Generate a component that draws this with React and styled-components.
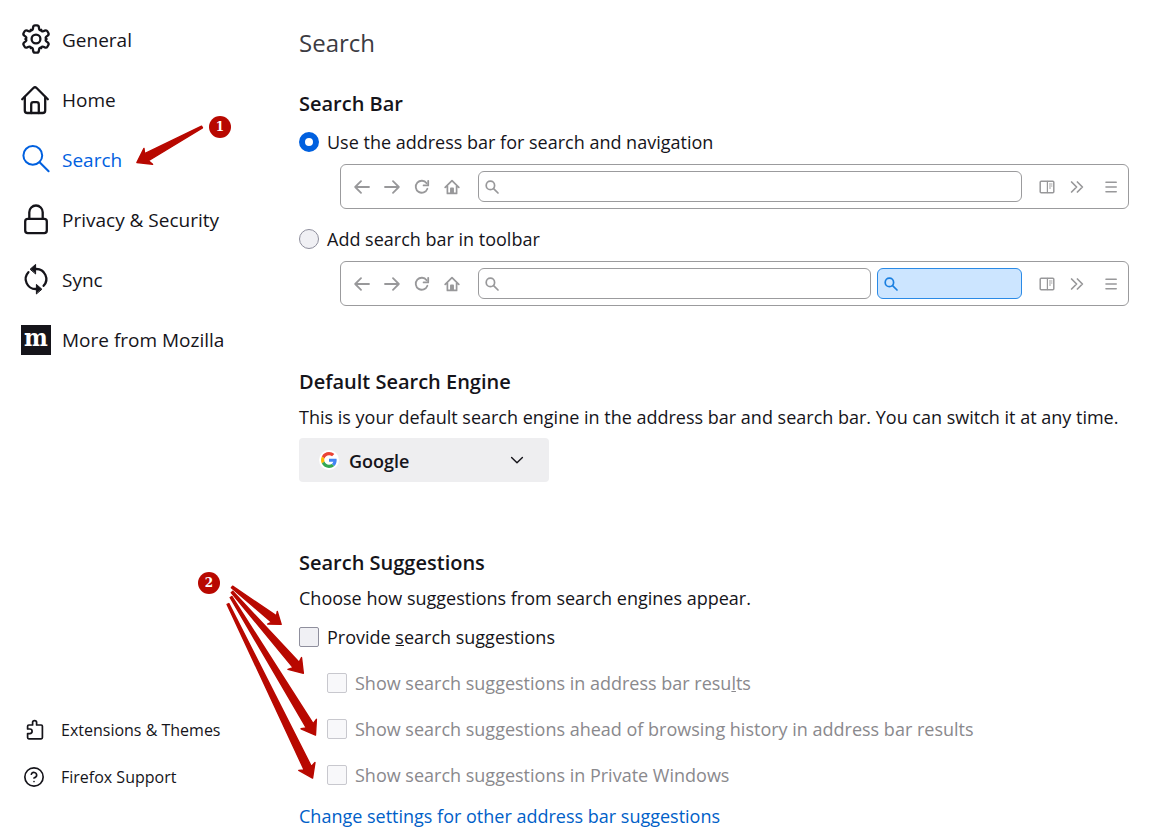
import React, { useState } from "react";
import styled, { createGlobalStyle } from "styled-components";
import { CircleQuestionMark } from "lucide-react";

// Styles
const GlobalStyle = createGlobalStyle`
  * {
    box-sizing: border-box;
  }
  body {
    margin: 0;
    background: #ffffff;
    color: #15141a;
    font-family: "Open Sans", "Noto Sans", sans-serif;
    font-size: 18px;
    line-height: 28px;
  }
`;

const Page = styled.div`
  position: relative;
  display: grid;
  grid-template-columns: 299px minmax(0, 1fr);
  min-height: 100vh;
`;

const Sidebar = styled.nav`
  display: flex;
  flex-direction: column;
  justify-content: space-between;
  padding: 10px 0 35px 21px;
`;

const NavList = styled.ul`
  list-style: none;
  margin: 0;
  padding: 0;
`;

const NavLink = styled.a`
  display: flex;
  align-items: center;
  gap: 11px;
  height: 60px;
  color: ${(props) => (props.$active ? "#0060df" : "#15141a")};
  font-size: 19px;
  text-decoration: none;

  svg {
    flex: none;
    overflow: visible;
  }
`;

const FooterLink = styled(NavLink)`
  height: 47px;
  gap: 16px;
  padding-left: 2px;
  font-size: 16px;
`;

const MozillaLogo = styled.span`
  display: flex;
  align-items: center;
  justify-content: center;
  width: 30px;
  height: 30px;
  background: #15141a;
  color: #ffffff;
  font: bold 25px/30px "DejaVu Serif Condensed", "DejaVu Serif", serif;
  padding-bottom: 4px;
`;

const Main = styled.main`
  padding: 27px 43px 4px 0;
`;

const Title = styled.h1`
  margin: 0 0 31px;
  color: #3c3b42;
  font-size: 24px;
  font-weight: 400;
  line-height: 32px;
`;

const Section = styled.section`
  margin-bottom: ${(props) => props.$space || 0}px;
`;

const Heading = styled.h2`
  margin: 0;
  font-size: 20px;
  font-weight: 600;
  line-height: 28px;
`;

const Text = styled.p`
  margin: 7px 0;
`;

const Option = styled.label`
  display: flex;
  align-items: center;
  gap: 8px;
  width: fit-content;
  margin-top: ${(props) => props.$top}px;
  margin-left: ${(props) => (props.$nested ? 28 : 0)}px;
  color: ${(props) => (props.$nested ? "#8a898d" : "#15141a")};
`;

const Radio = styled.input`
  appearance: none;
  flex: none;
  width: 20px;
  height: 20px;
  margin: 0;
  border: 1px solid #8f8f9d;
  border-radius: 50%;
  background: #f0f0f4;

  &:checked {
    border: 6px solid #0060df;
    background: #ffffff;
  }
`;

const Checkbox = styled.input`
  appearance: none;
  flex: none;
  width: 20px;
  height: 20px;
  margin: 0;
  border: 1px solid #8f8f9d;
  border-radius: 2px;
  background: #f0f0f4;

  &:checked {
    border-color: #0060df;
    background: #0060df;
  }
  &:disabled {
    border-color: #c8c8ce;
    background: #f8f8fa;
  }
`;

const ToolbarFrame = styled.div`
  display: flex;
  align-items: center;
  height: 45px;
  margin: 8px 0 0 41px;
  padding: 0 9px 0 13px;
  border: 1px solid #9b9b9d;
  border-radius: 6px;
`;

const ToolGroup = styled.div`
  display: flex;
  gap: 14px;
`;

const ToolButton = styled.button`
  display: flex;
  padding: 0;
  border: none;
  background: transparent;
  color: #98989a;
  margin-left: ${(props) => (props.$apart ? 4 : 0)}px;
`;

const Fields = styled.div`
  display: flex;
  flex: 1;
  gap: 6px;
  margin: 0 17px 0 18px;
`;

const FieldBox = styled.label`
  display: flex;
  align-items: center;
  flex: ${(props) => (props.$accent ? "0 0 145px" : "1")};
  gap: 6px;
  min-width: 0;
  height: 31px;
  padding: 0 6px;
  border: 1px solid ${(props) => (props.$accent ? "#2a8ae6" : "#9b9b9d")};
  border-radius: 6px;
  background: ${(props) => (props.$accent ? "#cce5ff" : "#ffffff")};
  color: ${(props) => (props.$accent ? "#1a7fe0" : "#98989a")};

  svg {
    flex: none;
  }
`;

const FieldInput = styled.input`
  flex: 1;
  min-width: 0;
  border: none;
  outline: none;
  background: transparent;
`;

const EngineWrapper = styled.div`
  position: relative;
  width: 250px;
`;

const EngineSelect = styled.select`
  appearance: none;
  display: block;
  width: 100%;
  height: 44px;
  padding: 2px 50px 0 50px;
  border: none;
  border-radius: 4px;
  background: #eeeef0;
  color: #15141a;
  font: 600 18px/28px "Open Sans", "Noto Sans", sans-serif;
`;

const EngineLogo = styled.span`
  position: absolute;
  top: 12px;
  left: 20px;
  display: flex;
  align-items: center;
  justify-content: center;
  width: 20px;
  height: 20px;
  border-radius: 50%;
  background: #ffffff;
  pointer-events: none;
`;

const EngineChevron = styled.span`
  position: absolute;
  top: 14px;
  right: 24px;
  display: flex;
  pointer-events: none;
`;

const MoreLink = styled.a`
  display: block;
  width: fit-content;
  margin-top: 13px;
  color: #0060c8;
  text-decoration: none;
`;

const Overlay = styled.svg`
  position: absolute;
  top: 0;
  left: 0;
  overflow: visible;
  pointer-events: none;
`;

const Badge = styled.span`
  position: absolute;
  top: ${(props) => props.$y}px;
  left: ${(props) => props.$x}px;
  width: 22px;
  height: 22px;
  border-radius: 50%;
  background: #b80800;
  color: #ffffff;
  font: bold 12px/22px "DejaVu Serif", serif;
  text-align: center;
`;

// Icons
const Icon = ({ size = 30, width = 2.3, children }) => (
  <svg
    width={size}
    height={size}
    viewBox={`0 0 ${size} ${size}`}
    fill="none"
    stroke="currentColor"
    strokeWidth={width}
    strokeLinecap="round"
    strokeLinejoin="round"
    aria-hidden="true"
  >
    {children}
  </svg>
);

const GearIcon = () => (
  <Icon>
    <g transform="translate(15 14)">
      {[0, 60, 120, 180, 240, 300].map((angle) => (
        <path
          key={angle}
          transform={`rotate(${angle})`}
          d="M-5.2 -9C-4.1 -8.4 -3.3 -9 -3.1 -10.2L-2.9 -11.8Q-2.6 -13.7 -1 -13.7H1Q2.6 -13.7 2.9 -11.8L3.1 -10.2C3.3 -9 4.1 -8.4 5.2 -9"
        />
      ))}
      <circle r="4.4" />
    </g>
  </Icon>
);

const HomeIcon = () => (
  <Icon>
    <path d="M1.2 14.2 12.4 3Q14 1.6 15.6 3L26.8 14.2" />
    <path d="M3.8 12V25.4Q3.8 28 6.4 28H21.6Q24.2 28 24.2 25.4V12" />
    <path d="M10.2 28V19.4Q10.2 17.2 12.4 17.2H15.6Q17.8 17.2 17.8 19.4V28" />
  </Icon>
);

const SearchIcon = () => (
  <Icon width={2}>
    <circle cx="11.8" cy="10.4" r="9.4" />
    <path d="M18.6 17.2 27.6 26.2" />
  </Icon>
);

const LockIcon = () => (
  <Icon>
    <rect x="4.2" y="13.8" width="21.6" height="14.4" rx="2.6" />
    <path d="M8.3 13.8V7.2a6.7 6.7 0 0 1 13.4 0V13.8" />
  </Icon>
);

const SyncIcon = () => (
  <Icon>
    <path d="M15 4A10 10 0 0 1 22.6 20.8" />
    <path d="M15 24A10 10 0 0 1 7.4 7.2" />
    <path
      d="M9.4 4 14.6 -0.6V8.6ZM20.6 24 15.4 19.4V28.6Z"
      fill="currentColor"
      strokeWidth="1"
    />
  </Icon>
);

const PuzzleIcon = () => (
  <Icon size={22} width={1.7}>
    <path d="M4.6 10V7.2Q4.6 6 5.8 6H9.6V3.6a2 2 0 0 1 4 0V6H18.2Q19.4 6 19.4 7.2V18.6Q19.4 19.8 18.2 19.8H5.8Q4.6 19.8 4.6 18.6V14.6H6.8a2.3 2.3 0 0 0 0-4.6Z" />
  </Icon>
);

const BackIcon = () => (
  <Icon size={16} width={1.8}>
    <path d="M15 8H1.4M7 2.2 1.2 8 7 13.8" />
  </Icon>
);

const ForwardIcon = () => (
  <Icon size={16} width={1.8}>
    <path d="M1 8H14.6M9 2.2 14.8 8 9 13.8" />
  </Icon>
);

const ReloadIcon = () => (
  <Icon size={16} width={1.8}>
    <path d="M13.4 9.8A6 6 0 1 1 12.6 4.2" />
    <path d="M14.2 1.8V6.4H9.6" />
  </Icon>
);

const SmallHomeIcon = () => (
  <Icon size={16} width={1.7}>
    <path d="M1.2 8.4 8 1.6 14.8 8.4M3.4 7V14.4H12.6V7" />
    <path d="M6.9 14V9.4H9.1V14Z" fill="currentColor" />
  </Icon>
);

const SmallSearchIcon = () => (
  <Icon size={14} width={1.7}>
    <circle cx="5.4" cy="5.4" r="4.2" />
    <path d="M8.6 8.6 13 13" />
  </Icon>
);

const ReaderIcon = () => (
  <Icon size={16} width={1.5}>
    <rect x="1.2" y="2.2" width="13.6" height="11.6" rx="1" />
    <path d="M8.4 2.4V13.6" strokeWidth="1.2" />
    <path d="M10.4 5H13M10.4 7H13M10.4 9H11.6" strokeWidth="0.9" />
  </Icon>
);

const OverflowIcon = () => (
  <Icon size={16} width={1.7}>
    <path d="M2.6 3 7.6 8 2.6 13M8.4 3 13.4 8 8.4 13" />
  </Icon>
);

const MenuIcon = () => (
  <Icon size={16} width={1.6}>
    <path d="M3 3.2H13.2M3 8H13.2M3 12.8H13.2" />
  </Icon>
);

const GoogleIcon = () => (
  <svg width="16" height="16" viewBox="0 0 48 48" aria-hidden="true">
    <path
      fill="#EA4335"
      d="M24 9.5c3.54 0 6.71 1.22 9.21 3.6l6.85-6.85C35.9 2.38 30.47 0 24 0 14.62 0 6.51 5.38 2.56 13.22l7.98 6.19C12.43 13.72 17.74 9.5 24 9.5z"
    />
    <path
      fill="#4285F4"
      d="M46.98 24.55c0-1.57-.15-3.09-.38-4.55H24v9.02h12.94c-.58 2.96-2.26 5.48-4.78 7.18l7.73 6c4.51-4.18 7.09-10.36 7.09-17.65z"
    />
    <path
      fill="#FBBC05"
      d="M10.53 28.59c-.48-1.45-.76-2.99-.76-4.59s.27-3.14.76-4.59l-7.98-6.19C.92 16.46 0 20.12 0 24c0 3.88.92 7.54 2.56 10.78l7.97-6.19z"
    />
    <path
      fill="#34A853"
      d="M24 48c6.48 0 11.93-2.13 15.89-5.81l-7.73-6c-2.15 1.45-4.92 2.3-8.16 2.3-6.26 0-11.57-4.22-13.47-9.91l-7.98 6.19C6.51 42.62 14.62 48 24 48z"
    />
  </svg>
);

// Data
const pages = [
  { id: "general", label: "General", icon: <GearIcon /> },
  { id: "home", label: "Home", icon: <HomeIcon /> },
  { id: "search", label: "Search", icon: <SearchIcon /> },
  { id: "privacy", label: "Privacy & Security", icon: <LockIcon /> },
  { id: "sync", label: "Sync", icon: <SyncIcon /> },
  {
    id: "mozilla",
    label: "More from Mozilla",
    icon: <MozillaLogo aria-hidden="true">m</MozillaLogo>,
  },
];

const arrows = [
  { from: [202, 127], to: [136, 163] },
  { from: [232, 587], to: [282, 625], head: 12 },
  { from: [232, 592], to: [304, 674] },
  { from: [231, 597], to: [316, 736] },
  { from: [228, 604], to: [313, 779] },
];

// Tapered arrow: thin at the tail, wide where it meets the head
const Arrow = ({ from, to, head = 14 }) => {
  const length = Math.hypot(to[0] - from[0], to[1] - from[1]);
  const angle = Math.atan2(to[1] - from[1], to[0] - from[0]);
  const wing = head > 12 ? 9 : 8;
  const neck = length - head + 2;
  return (
    <path
      transform={`translate(${from}) rotate(${(angle * 180) / Math.PI})`}
      d={`M0 -1L${neck} -4L${length - head} ${-wing}L${length - 1} 0L${
        length - head
      } ${wing}L${neck} 4L0 1Z`}
    />
  );
};

const Field = ({ label, accent }) => (
  <FieldBox $accent={accent}>
    <SmallSearchIcon />
    <FieldInput type="text" aria-label={label} readOnly tabIndex={-1} />
  </FieldBox>
);

const Toolbar = ({ withSearchBar }) => (
  <ToolbarFrame>
    <ToolGroup>
      <ToolButton type="button" aria-label="Back">
        <BackIcon />
      </ToolButton>
      <ToolButton type="button" aria-label="Forward">
        <ForwardIcon />
      </ToolButton>
      <ToolButton type="button" aria-label="Reload">
        <ReloadIcon />
      </ToolButton>
      <ToolButton type="button" aria-label="Home">
        <SmallHomeIcon />
      </ToolButton>
    </ToolGroup>
    <Fields>
      <Field label="Address bar" />
      {withSearchBar && <Field label="Search bar" accent />}
    </Fields>
    <ToolGroup>
      <ToolButton type="button" aria-label="Reader view">
        <ReaderIcon />
      </ToolButton>
      <ToolButton type="button" aria-label="More tools">
        <OverflowIcon />
      </ToolButton>
      <ToolButton type="button" aria-label="Menu" $apart>
        <MenuIcon />
      </ToolButton>
    </ToolGroup>
  </ToolbarFrame>
);

// Content
export default function App() {
  const [bar, setBar] = useState("address");
  const [suggest, setSuggest] = useState(false);

  return (
    <>
      <GlobalStyle />
      <Page>
        <Sidebar>
          <NavList>
            {pages.map((page) => (
              <li key={page.id}>
                <NavLink href={`#${page.id}`} $active={page.id === "search"}>
                  {page.icon}
                  {page.label}
                </NavLink>
              </li>
            ))}
          </NavList>
          <NavList>
            <li>
              <FooterLink href="#extensions">
                <PuzzleIcon />
                Extensions &amp; Themes
              </FooterLink>
            </li>
            <li>
              <FooterLink href="#support">
                <CircleQuestionMark size={22} strokeWidth={1.8} />
                Firefox Support
              </FooterLink>
            </li>
          </NavList>
        </Sidebar>

        <Main>
          <Title>Search</Title>

          <Section $space={62}>
            <Heading>Search Bar</Heading>
            <Option $top={10}>
              <Radio
                type="radio"
                name="bar"
                checked={bar === "address"}
                onChange={() => setBar("address")}
              />
              Use the address bar for search and navigation
            </Option>
            <Toolbar />
            <Option $top={16}>
              <Radio
                type="radio"
                name="bar"
                checked={bar === "toolbar"}
                onChange={() => setBar("toolbar")}
              />
              Add search bar in toolbar
            </Option>
            <Toolbar withSearchBar />
          </Section>

          <Section $space={67}>
            <Heading>Default Search Engine</Heading>
            <Text>
              This is your default search engine in the address bar and search
              bar. You can switch it at any time.
            </Text>
            <EngineWrapper>
              <EngineSelect aria-label="Default Search Engine">
                <option>Google</option>
              </EngineSelect>
              <EngineLogo>
                <GoogleIcon />
              </EngineLogo>
              <EngineChevron>
                <Icon size={16} width={1.4}>
                  <path d="M2.6 5.4 8 10.8 13.4 5.4" />
                </Icon>
              </EngineChevron>
            </EngineWrapper>
          </Section>

          <Section>
            <Heading>Search Suggestions</Heading>
            <Text>Choose how suggestions from search engines appear.</Text>
            <Option $top={11}>
              <Checkbox
                type="checkbox"
                checked={suggest}
                onChange={() => setSuggest(!suggest)}
              />
              <span>
                Provide <u>s</u>earch suggestions
              </span>
            </Option>
            <Option $top={18} $nested>
              <Checkbox type="checkbox" disabled={!suggest} />
              <span>
                Show search suggestions in address bar resu<u>l</u>ts
              </span>
            </Option>
            <Option $top={18} $nested>
              <Checkbox type="checkbox" disabled={!suggest} />
              Show search suggestions ahead of browsing history in address bar
              results
            </Option>
            <Option $top={18} $nested>
              <Checkbox type="checkbox" disabled={!suggest} />
              Show search suggestions in Private Windows
            </Option>
            <MoreLink href="#suggestions">
              Change settings for other address bar suggestions
            </MoreLink>
          </Section>
        </Main>

        <Overlay
          width="1"
          height="1"
          fill="#b80800"
          stroke="#b80800"
          strokeWidth="1.4"
          strokeLinejoin="round"
          aria-hidden="true"
        >
          {arrows.map((arrow, index) => (
            <Arrow key={index} {...arrow} />
          ))}
        </Overlay>
        <Badge $x={209} $y={116}>
          1
        </Badge>
        <Badge $x={198} $y={572}>
          2
        </Badge>
      </Page>
    </>
  );
}
